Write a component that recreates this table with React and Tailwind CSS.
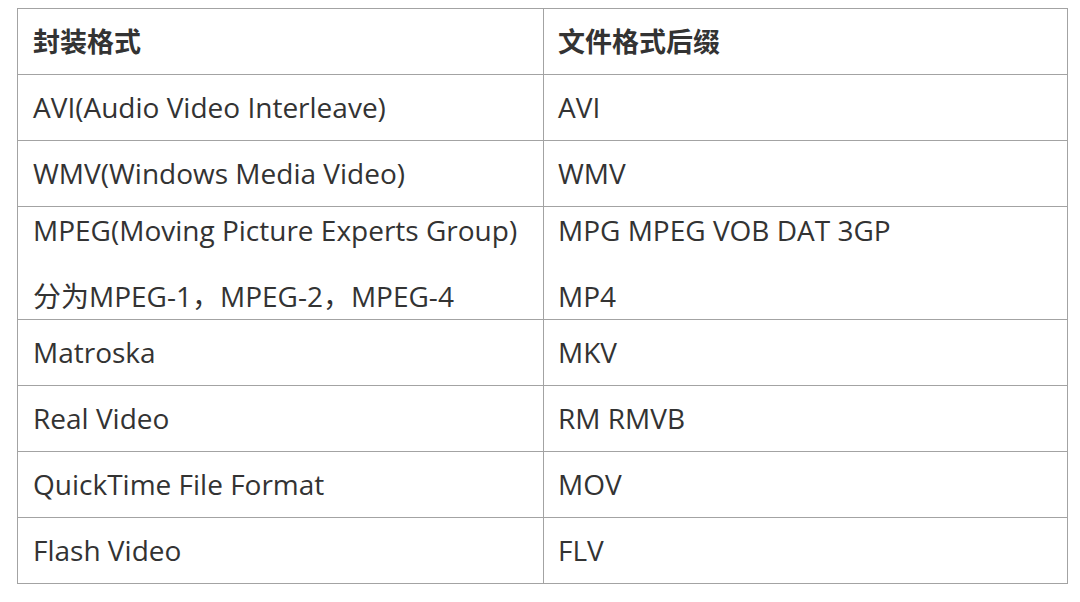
export default function App() {
  const rows = [
    ["AVI(Audio Video Interleave)", "AVI"],
    ["WMV(Windows Media Video)", "WMV"],
    null,
    ["Matroska", "MKV"],
    ["Real Video", "RM RMVB"],
    ["QuickTime File Format", "MOV"],
    ["Flash Video", "FLV"],
  ];
  const font = { fontFamily: '"Open Sans", "Noto Sans CJK SC", sans-serif' };
  return (
    <div className="w-[1080px] h-[602px] bg-white pt-[8px] pl-[17px]" style={font}>
      <div className="w-[1051px] border-l border-t border-[#a3a3a3] text-[#333333] text-[28px] leading-[36px]">
        <div className="grid grid-cols-[526px_524px]">
          <div className="h-[66px] border-r border-b border-[#a3a3a3] pl-[15px] pt-[15px] font-bold text-[27px]">封装格式</div>
          <div className="h-[66px] border-r border-b border-[#a3a3a3] pl-[14px] pt-[15px] font-bold text-[27px]">文件格式后缀</div>
          {rows.map((r, i) =>
            r ? (
              <div key={i} className="contents">
                <div className="h-[66px] border-r border-b border-[#a3a3a3] pl-[15px] pt-[14px] whitespace-nowrap">{r[0]}</div>
                <div className="h-[66px] border-r border-b border-[#a3a3a3] pl-[14px] pt-[14px] whitespace-nowrap">{r[1]}</div>
              </div>
            ) : (
              <div key={i} className="contents">
                <div className="h-[113px] border-r border-b border-[#a3a3a3] pl-[15px] pt-[5px] flex flex-col gap-[30px] whitespace-nowrap">
                  <div>MPEG(Moving Picture Experts Group)</div>
                  <div>分为MPEG-1，MPEG-2，MPEG-4</div>
                </div>
                <div className="h-[113px] border-r border-b border-[#a3a3a3] pl-[14px] pt-[5px] flex flex-col gap-[30px] whitespace-nowrap">
                  <div>MPG MPEG VOB DAT 3GP</div>
                  <div>MP4</div>
                </div>
              </div>
            )
          )}
        </div>
      </div>
    </div>
  );
}
